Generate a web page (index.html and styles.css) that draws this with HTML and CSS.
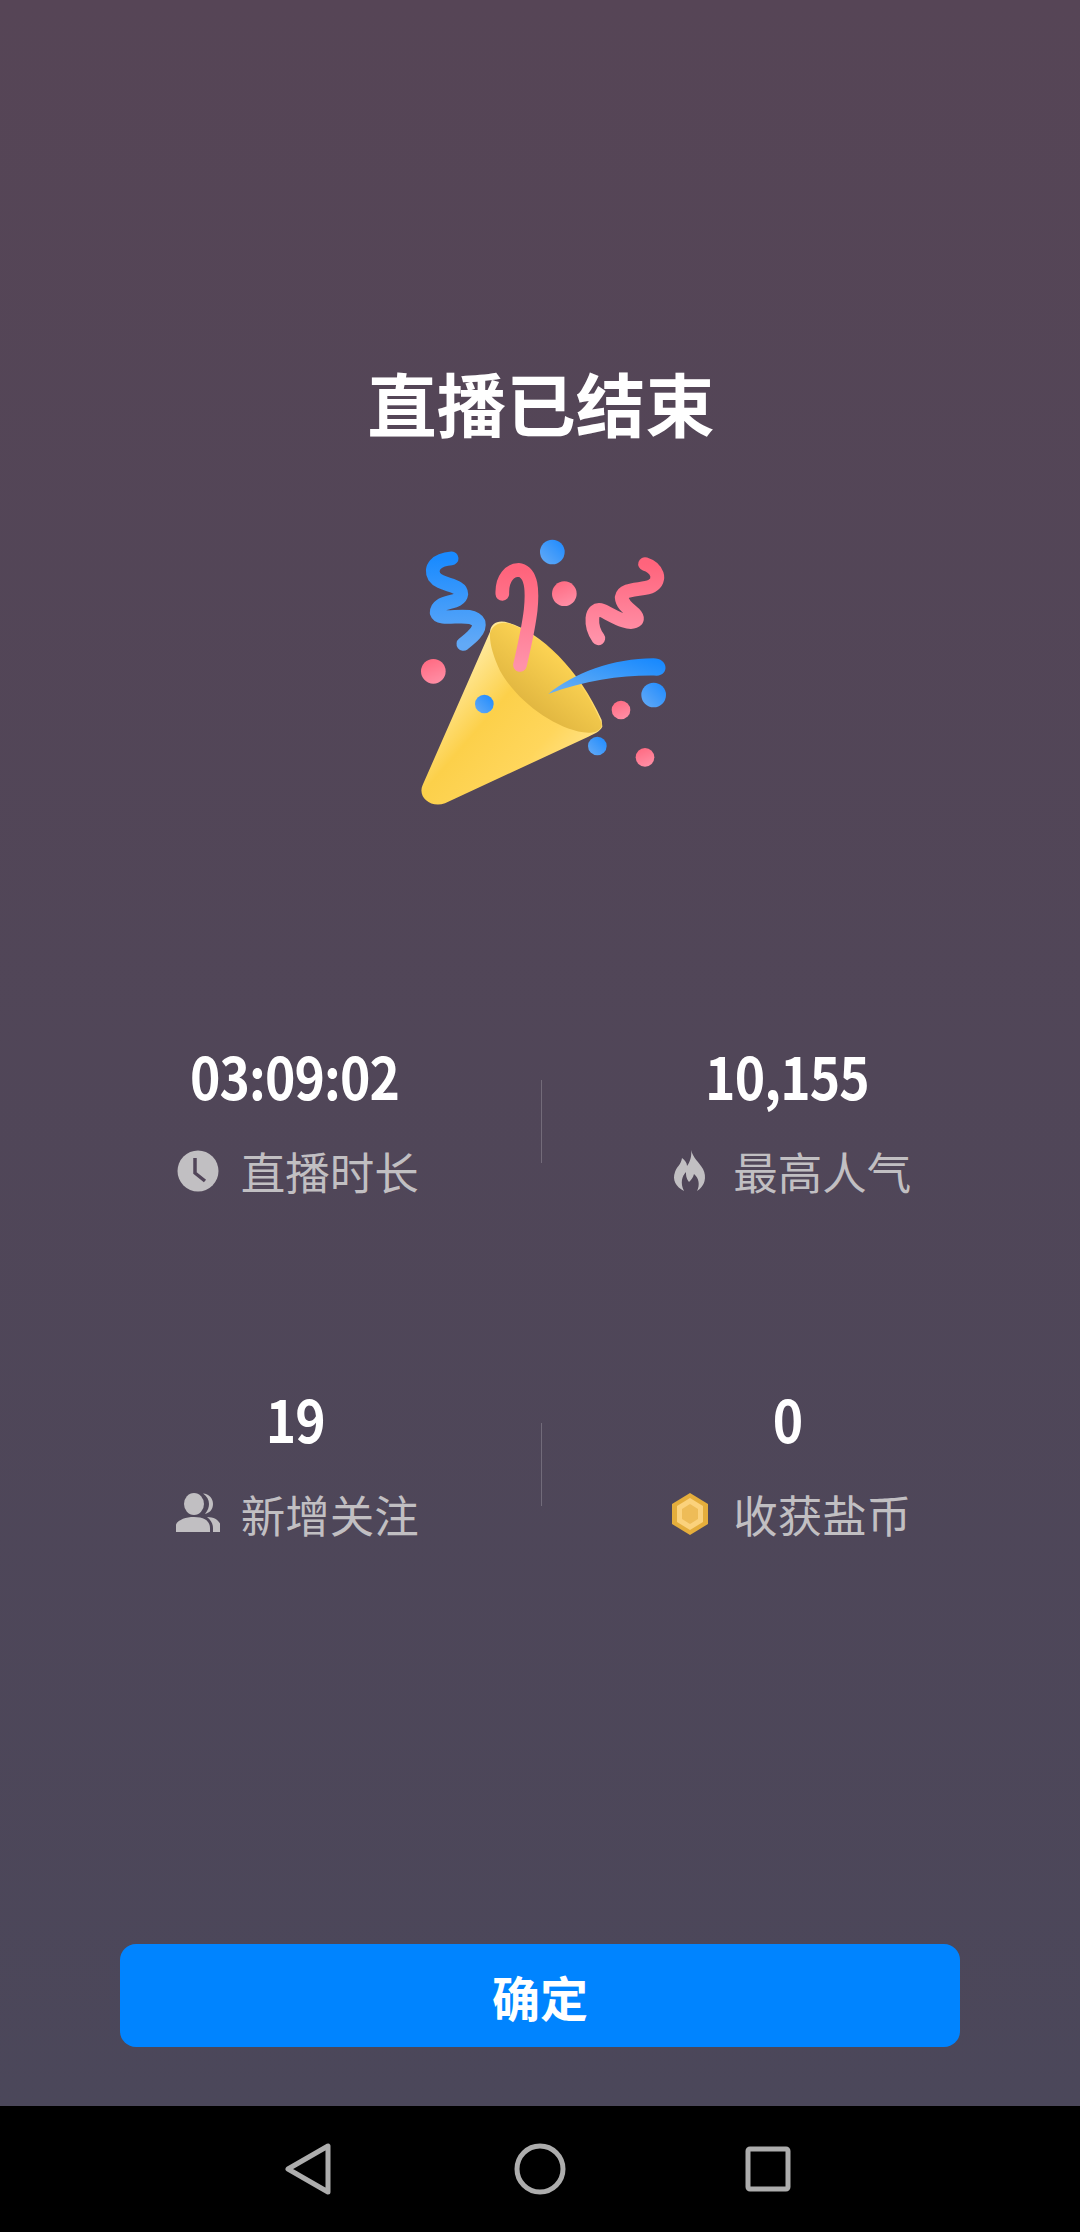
FILE: index.html
```html
<!DOCTYPE html>
<html lang="zh-CN">
<head>
  <meta charset="UTF-8" />
  <meta name="viewport" content="width=device-width, initial-scale=1.0"/>
  <title>直播已结束</title>
  <link rel="stylesheet" href="styles.css">
</head>
<body>

  <main class="summary">
    <h1 class="title">直播已结束</h1>

    <svg class="party" viewBox="0 0 960 960" aria-hidden="true">
      <defs>
        <linearGradient id="blueRibbon" x1="0" y1="0" x2="0" y2="1">
          <stop offset="0" stop-color="#1a8bff"/>
          <stop offset="1" stop-color="#62a9f6"/>
        </linearGradient>
        <linearGradient id="pinkRibbon" x1="0" y1="0" x2="0" y2="1">
          <stop offset="0" stop-color="#ff647c"/>
          <stop offset="1" stop-color="#ff92a9"/>
        </linearGradient>
        <linearGradient id="streamer" x1="1" y1="0" x2="0" y2="1">
          <stop offset="0" stop-color="#1387ff"/>
          <stop offset="1" stop-color="#6fb2f2"/>
        </linearGradient>
        <linearGradient id="blueDot" x1="1" y1="0" x2="0" y2="1">
          <stop offset="0" stop-color="#1c8aff"/>
          <stop offset="1" stop-color="#66abf5"/>
        </linearGradient>
        <linearGradient id="pinkDot" x1="0.3" y1="0" x2="0.7" y2="1">
          <stop offset="0" stop-color="#ff6b82"/>
          <stop offset="1" stop-color="#ff8fa6"/>
        </linearGradient>
        <linearGradient id="cone" x1="0.12" y1="0.4" x2="0.75" y2="0.95">
          <stop offset="0" stop-color="#ffe795"/>
          <stop offset="0.32" stop-color="#fcd04a"/>
          <stop offset="0.7" stop-color="#ffd65c"/>
          <stop offset="1" stop-color="#ffe38a"/>
        </linearGradient>
        <linearGradient id="coneInside" x1="0.2" y1="0.8" x2="0.65" y2="0.25">
          <stop offset="0" stop-color="#dbb03c"/>
          <stop offset="1" stop-color="#ffd655"/>
        </linearGradient>
      </defs>

      <path class="ribbon" stroke="url(#blueRibbon)" d="M215 145C168 148 148 175 163 200C182 228 244 222 244 252C240 285 170 268 170 308C180 340 275 298 296 338C302 362 272 385 250 402"/>
      <path class="ribbon" stroke="url(#pinkRibbon)" d="M795 162C832 174 846 210 815 228C790 242 730 232 725 262C728 298 778 308 770 330C750 350 700 318 668 302C628 288 630 350 655 385"/>

      <path fill="url(#cone)" d="M330 365C332 340 355 328 385 338C480 365 600 480 665 630L667 650C660 665 640 672 625 680L195 880C150 895 112 860 128 825Z"/>
      <path fill="url(#coneInside)" d="M330 370C338 340 370 330 400 345C500 385 610 510 665 640C668 662 640 672 610 667C520 652 410 572 360 482C340 440 328 400 330 370Z"/>

      <path class="ribbon" stroke="url(#pinkRibbon)" d="M367 252C365 205 390 178 420 180C455 190 458 240 452 300C445 360 430 420 420 465"/>
      <path fill="url(#streamer)" d="M505 552C580 490 700 445 820 445C866 445 868 497 830 497C730 495 620 510 505 552Z"/>

      <circle cx="517" cy="126" r="37" fill="url(#blueDot)"/>
      <circle cx="553" cy="251" r="37" fill="url(#pinkDot)"/>
      <circle cx="160" cy="484" r="37" fill="url(#pinkDot)"/>
      <circle cx="821" cy="555" r="37" fill="url(#blueDot)"/>
      <circle cx="723" cy="600" r="28" fill="url(#pinkDot)"/>
      <circle cx="652" cy="708" r="28" fill="url(#blueDot)"/>
      <circle cx="795" cy="742" r="28" fill="url(#pinkDot)"/>
      <circle cx="313" cy="582" r="28" fill="url(#blueDot)"/>
    </svg>

    <section class="stats">
      <div class="stat-row">
        <div class="stat">
          <div class="stat-value">03:09:02</div>
          <div class="stat-label">
            <svg class="stat-icon" viewBox="0 0 44 44" aria-hidden="true">
              <circle cx="22" cy="22" r="20.5" fill="#c1bfc2"/>
              <path d="M19 9V24L29 32" fill="none" stroke="#514559" stroke-width="3.5"/>
            </svg>
            <span>直播时长</span>
          </div>
        </div>
        <div class="stat-divider"></div>
        <div class="stat">
          <div class="stat-value">10,155</div>
          <div class="stat-label">
            <svg class="stat-icon" viewBox="0 0 44 44" aria-hidden="true">
              <path fill="#c1bfc2" fill-rule="evenodd" d="M23 1C25 9 31 13 35 20C39 28 37 37 29 42C32 36 31 29 26 25C25 29 23 31 21 33C18 29 18 26 18 23C14 27 12 34 16 42C8 38 4 31 7 23C9 17 13 16 14 9C17 11 19 14 19 17C22 13 24 7 23 1Z"/>
            </svg>
            <span>最高人气</span>
          </div>
        </div>
      </div>

      <div class="stat-row">
        <div class="stat">
          <div class="stat-value">19</div>
          <div class="stat-label">
            <svg class="stat-icon" viewBox="0 0 44 44" aria-hidden="true">
              <ellipse cx="18" cy="12" rx="10" ry="11" fill="#c1bfc2"/>
              <path fill="#c1bfc2" d="M-1 40V36C-1 29 8 25 18 25C28 25 34 29 34 36V40Z"/>
              <path fill="#c1bfc2" d="M27 1.500C33 2 37 6 37 12C37 18 33 21 29 22C32 18 33 15 33 12C33 8 31 4 27 1.500Z"/>
              <path fill="#c1bfc2" d="M31 25C40 25 45 30 45 36V40H37V36C37 32 35 28 31 25Z"/>
            </svg>
            <span>新增关注</span>
          </div>
        </div>
        <div class="stat-divider"></div>
        <div class="stat">
          <div class="stat-value">0</div>
          <div class="stat-label">
            <svg class="stat-icon" viewBox="0 0 44 44" aria-hidden="true">
              <path fill="#e5ae3c" d="M22 1L40 12V32L22 43L4 32V12Z"/>
              <path fill="#fbd27c" d="M22 6L35 14V30L22 38L9 30V14Z"/>
              <path fill="#eebc57" d="M22 12L30 17V27L22 32L14 27V17Z"/>
            </svg>
            <span>收获盐币</span>
          </div>
        </div>
      </div>
    </section>

    <button class="confirm" type="button">确定</button>
  </main>

  <nav class="nav-bar">
    <svg class="nav-icon nav-back" viewBox="0 0 52 54" aria-hidden="true">
      <path d="M46 4V50L6 27Z"/>
    </svg>
    <svg class="nav-icon" viewBox="0 0 52 54" aria-hidden="true">
      <circle cx="26" cy="27" r="23"/>
    </svg>
    <svg class="nav-icon" viewBox="0 0 52 54" aria-hidden="true">
      <rect x="6" y="7" width="40" height="40" rx="2"/>
    </svg>
  </nav>

</body>
</html>
```

FILE: styles.css
```css
* {
  box-sizing: border-box;
}

html, body {
  margin: 0;
  padding: 0;
  height: 2232px;
  font-family: "Noto Sans CJK SC", "Noto Sans", sans-serif;
  color: #fff;
}

body {
  display: flex;
  flex-direction: column;
  background: #000;
}

.summary {
  flex: 1;
  display: flex;
  flex-direction: column;
  align-items: center;
  padding-top: 352px;
  background: linear-gradient(to bottom, #564556, #4b475a);
}

.title {
  margin: 0;
  padding-left: 2px;
  font-size: 69.5px;
  line-height: 100px;
  font-weight: 700;
}

.party {
  display: block;
  width: 320px;
  height: 320px;
  margin-top: 58px;
}

.ribbon {
  fill: none;
  stroke-width: 41;
  stroke-linecap: round;
  stroke-linejoin: round;
}

/* stats */
.stats {
  width: 100%;
  margin-top: 210px;
  display: flex;
  flex-direction: column;
  gap: 182px;
}

.stat-row {
  display: grid;
  grid-template-columns: 1fr 1px 1fr;
  padding: 0 47px 0 49px;
}

.stat {
  display: flex;
  flex-direction: column;
  align-items: center;
}

/* digits in the app font are narrower than Noto's */
.stat-value {
  font-size: 58px;
  line-height: 70px;
  font-weight: 700;
  letter-spacing: -1px;
  transform: scaleX(0.89);
}

.stat-label {
  display: flex;
  align-items: center;
  gap: 21px;
  margin-top: 31px;
  padding-left: 5px;
  font-size: 44.5px;
  line-height: 60px;
  color: #c1bfc2;
}

.stat-icon {
  display: block;
  width: 44px;
  height: 44px;
}

.stat-divider {
  width: 1px;
  height: 83px;
  margin-top: 40px;
  background: rgba(255, 255, 255, 0.2);
}

.confirm {
  width: 840px;
  height: 103px;
  margin-top: auto;
  margin-bottom: 59px;
  border: none;
  border-radius: 16px;
  background: #0084ff;
  color: #fff;
  font-family: inherit;
  font-size: 48px;
  font-weight: 700;
}

/* android nav bar */
.nav-bar {
  height: 126px;
  flex-shrink: 0;
  display: flex;
  justify-content: center;
  align-items: center;
  gap: 176px;
  background: #000;
}

.nav-icon {
  display: block;
  width: 52px;
  height: 54px;
  fill: none;
  stroke: #adadad;
  stroke-width: 5;
  stroke-linejoin: round;
}

.nav-back {
  margin-left: -4px;
  margin-right: 4px;
}
```
